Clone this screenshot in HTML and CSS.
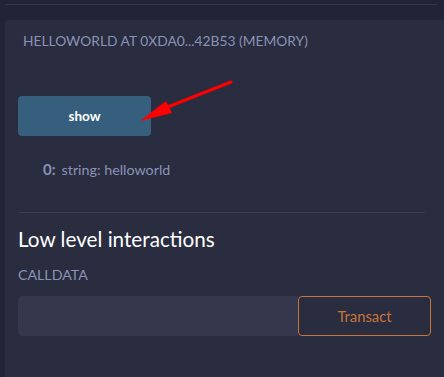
FILE: index.html
```html
<!DOCTYPE html>
<html>
<head>
<meta charset="utf-8">
<link rel="stylesheet" href="styles.css">
</head>
<body>
<div class="topline"></div>
<div class="card">
  <div class="title">HELLOWORLD AT 0XDA0...42B53 (MEMORY)</div>
  <div class="fn">
    <button class="show">show</button>
  </div>
  <div class="output"><span class="idx">0:</span><span class="val">string: helloworld</span></div>
  <hr class="sep">
  <div class="low">Low level interactions</div>
  <div class="label">CALLDATA</div>
  <div class="row">
    <div class="input"></div>
    <button class="transact">Transact</button>
  </div>
</div>
<svg class="arrow" width="444" height="377" viewBox="0 0 444 377">
  <line x1="231" y1="82" x2="160" y2="110" stroke="#ff0000" stroke-width="3" stroke-linecap="round"/>
  <polygon points="140,121 166,101 172,113" fill="#ff0000"/>
</svg>
</body>
</html>
```

FILE: styles.css
```css
html, body {
  margin: 0;
  padding: 0;
  background: #222336;
  height: 377px;
  overflow: hidden;
  font-family: Lato, "Open Sans", sans-serif;
}
body {
  display: flex;
  flex-direction: column;
}
.topline {
  height: 1px;
  margin: 4px 7px 0 5px;
  background: #33384d;
}
.card {
  flex: 1;
  margin: 15px 0 0 5px;
  background: #2a2c3f;
  border-radius: 4px 0 0 0;
  padding: 12px 13px 0 13px;
}
.title {
  padding-left: 5px;
  font-size: 13.8px;
  line-height: 18px;
  color: #8a93b6;
}
.fn {
  margin-top: 46px;
}
.show {
  width: 133px;
  height: 40px;
  border: none;
  border-radius: 4px;
  background: #365f7d;
  color: #ffffff;
  font-family: Lato, sans-serif;
  font-weight: 700;
  font-size: 13.5px;
  padding: 0;
}
.output {
  margin-top: 24px;
  padding-left: 25px;
  display: flex;
  align-items: baseline;
  color: #8a93b6;
  font-size: 14.3px;
  line-height: 18px;
}
.idx {
  font-size: 15px;
  font-weight: 700;
  margin-right: 6px;
}
.sep {
  margin: 33px 6px 0 0;
  border: none;
  height: 1px;
  background: #3a3e53;
}
.low {
  margin-top: 13px;
  color: #ffffff;
  font-size: 20.7px;
  line-height: 26px;
}
.label {
  margin-top: 14px;
  color: #8a93b6;
  font-size: 14.2px;
  line-height: 18px;
}
.row {
  margin-top: 12px;
  display: flex;
}
.input {
  flex: 1;
  height: 40px;
  background: #35384c;
  border-radius: 4px 0 0 4px;
}
.transact {
  width: 133px;
  height: 40px;
  background: transparent;
  border: 1px solid #c97539;
  border-radius: 4px;
  color: #c97539;
  font-family: Lato, sans-serif;
  font-size: 14.8px;
  padding: 0;
}
.arrow {
  position: absolute;
  left: 0;
  top: 0;
}
```
